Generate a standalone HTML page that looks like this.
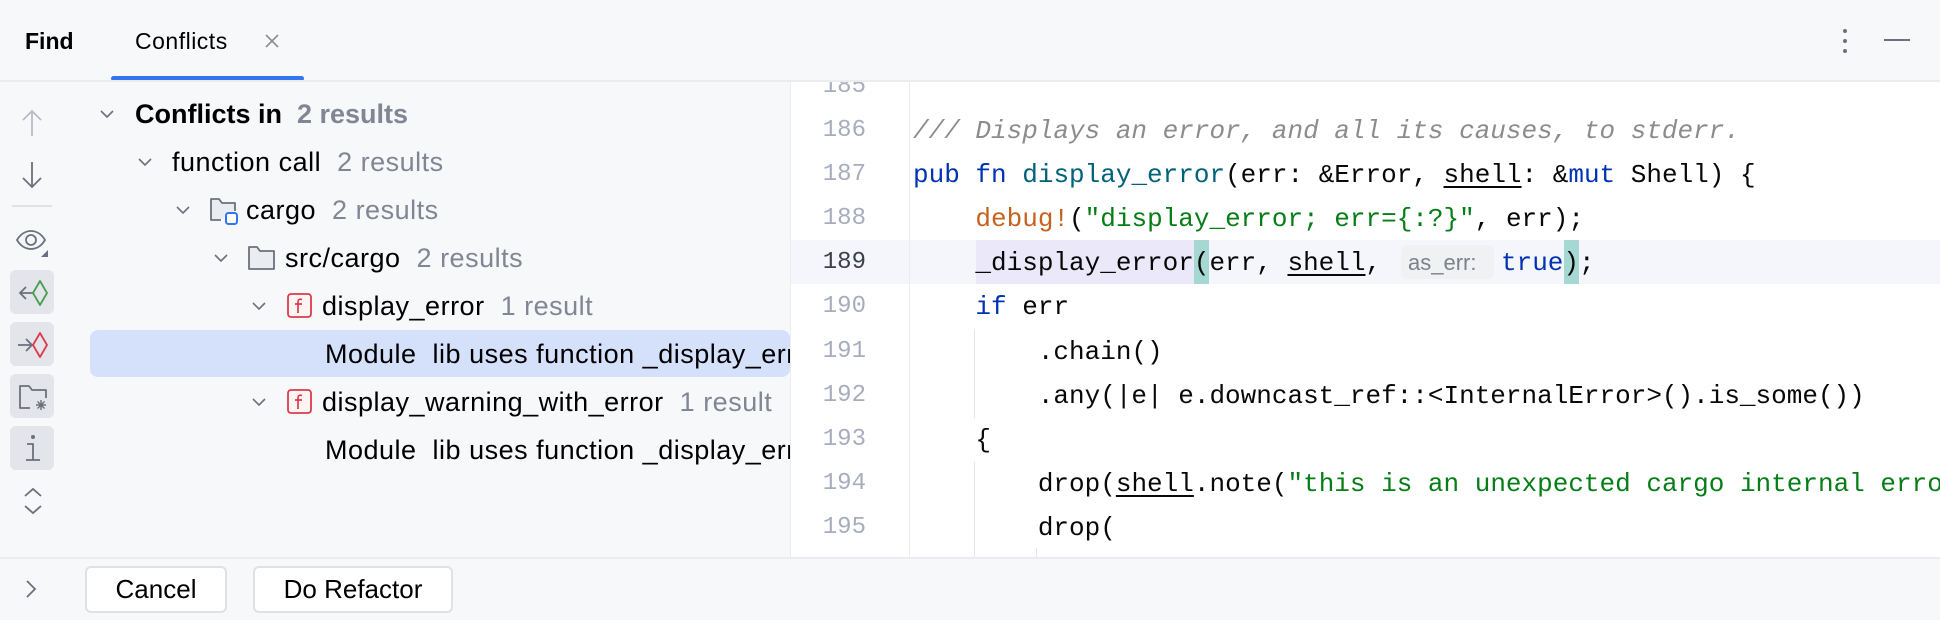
<!DOCTYPE html>
<html><head><meta charset="utf-8"><style>
*{margin:0;padding:0;box-sizing:border-box}
body{width:1940px;height:620px;overflow:hidden;background:#f7f8fa;font-family:"Liberation Sans",sans-serif;color:#000;position:relative}
.a{position:absolute;white-space:pre}
.t{font-size:27px;letter-spacing:0.5px;line-height:48px;height:48px}
.g{color:#818594}
.chev{position:absolute;width:14px;height:14px}
.code{font-family:"Liberation Mono",monospace;font-size:26px;line-height:44px;height:44px;color:#080808}
.ln{font-family:"Liberation Mono",monospace;font-size:24px;line-height:44px;color:#a8adbd;width:70px;text-align:right;left:796px}
.kw{color:#0033b3}.fn{color:#00627a}.str{color:#067d17}.mac{color:#c7611d}.cm{color:#8c8c8c;font-style:italic}
u{text-decoration:underline;text-underline-offset:4px}
.tb{position:absolute;left:10px;width:44px;height:44px;border-radius:6px;background:#e3e5ea}
</style></head><body>
<!-- header -->
<div class="a" style="left:25px;top:24px;font-size:23px;font-weight:bold;line-height:34px">Find</div>
<div class="a" style="left:135px;top:24px;font-size:23px;line-height:34px;letter-spacing:0.5px">Conflicts</div>
<svg class="a" style="left:264px;top:33px" width="16" height="16"><path d="M2 2L14 14M14 2L2 14" stroke="#8c8f98" stroke-width="1.6"/></svg>
<div class="a" style="left:111px;top:76px;width:193px;height:5px;background:#3574f0;border-radius:3px"></div>
<div class="a" style="left:0;top:80px;width:1940px;height:2px;background:#ebecf0"></div>
<svg class="a" style="left:1838px;top:28px" width="14" height="26"><circle cx="7" cy="3" r="2" fill="#6c707e"/><circle cx="7" cy="13" r="2" fill="#6c707e"/><circle cx="7" cy="23" r="2" fill="#6c707e"/></svg>
<div class="a" style="left:1884px;top:39px;width:26px;height:2px;background:#6c707e"></div>

<!-- left toolbar -->
<svg class="a" style="left:20px;top:108px" width="24" height="30"><path d="M12 28V3M3 12L12 3L21 12" stroke="#b9bcc4" stroke-width="1.8" fill="none"/></svg>
<svg class="a" style="left:20px;top:160px" width="24" height="30"><path d="M12 2V27M3 18L12 27L21 18" stroke="#6c707e" stroke-width="1.8" fill="none"/></svg>
<div class="a" style="left:12px;top:205px;width:40px;height:2px;background:#dfe1e5"></div>
<svg class="a" style="left:14px;top:226px" width="40" height="34"><path d="M3 14C10 2 24 2 31 14C24 26 10 26 3 14Z" stroke="#6c707e" stroke-width="1.8" fill="none"/><circle cx="17" cy="14" r="5" stroke="#6c707e" stroke-width="1.8" fill="none"/><path d="M34 24L34 31L27 31Z" fill="#6c707e"/></svg>
<div class="tb" style="top:270px"></div>
<svg class="a" style="left:16px;top:276px" width="34" height="34"><path d="M18 17H4M10 11L4 17L10 23" stroke="#6c707e" stroke-width="1.8" fill="none"/><path d="M24 5L31 17L24 29L17 17Z" stroke="#4a9d4f" stroke-width="1.8" fill="none" stroke-linejoin="round"/></svg>
<div class="tb" style="top:322px"></div>
<svg class="a" style="left:16px;top:328px" width="34" height="34"><path d="M2 17H16M10 11L16 17L10 23" stroke="#6c707e" stroke-width="1.8" fill="none"/><path d="M24 5L31 17L24 29L17 17Z" stroke="#db3b4b" stroke-width="1.8" fill="none" stroke-linejoin="round"/></svg>
<div class="tb" style="top:374px"></div>
<svg class="a" style="left:16px;top:380px" width="34" height="34"><path d="M14 28H4V6H13L16 10H30V18" stroke="#6c707e" stroke-width="1.8" fill="none" stroke-linejoin="round"/><circle cx="25" cy="25" r="7" fill="#e3e5ea"/><path d="M25 20V30M20 25H30M21.5 21.5L28.5 28.5M28.5 21.5L21.5 28.5" stroke="#6c707e" stroke-width="1.4"/></svg>
<div class="tb" style="top:426px"></div>
<svg class="a" style="left:20px;top:432px" width="26" height="32"><circle cx="13" cy="5" r="2" fill="#6c707e"/><path d="M7 12H13V28M6 28H20" stroke="#6c707e" stroke-width="1.8" fill="none"/></svg>
<svg class="a" style="left:22px;top:486px" width="22" height="30"><path d="M3 10L11 3L19 10M3 20L11 27L19 20" stroke="#6c707e" stroke-width="1.8" fill="none"/></svg>
<svg class="a" style="left:24px;top:578px" width="14" height="22"><path d="M3 3L11 11L3 19" stroke="#6c707e" stroke-width="1.8" fill="none"/></svg>

<!-- tree -->
<div class="a" style="left:90px;top:330px;width:700px;height:47px;background:#d5e1fa;border-radius:8px"></div>
<svg class="chev" style="left:100px;top:107px"><path d="M1 4L7 10L13 4" stroke="#6c707e" stroke-width="1.6" fill="none"/></svg>
<div class="a t" style="left:135px;top:90px;font-weight:bold;letter-spacing:0">Conflicts in  <span class="g">2 results</span></div>
<svg class="chev" style="left:138px;top:155px"><path d="M1 4L7 10L13 4" stroke="#6c707e" stroke-width="1.6" fill="none"/></svg>
<div class="a t" style="left:172px;top:138px">function call  <span class="g">2 results</span></div>
<svg class="chev" style="left:176px;top:203px"><path d="M1 4L7 10L13 4" stroke="#6c707e" stroke-width="1.6" fill="none"/></svg>
<svg class="a" style="left:208px;top:196px" width="34" height="30"><path d="M13 24H3V3H11L14 7H27V15" stroke="#6c707e" stroke-width="1.8" fill="#ebecf0" stroke-linejoin="round"/><rect x="18" y="17" width="11" height="11" rx="2.5" stroke="#3574f0" stroke-width="2" fill="#fff"/></svg>
<div class="a t" style="left:246px;top:186px">cargo  <span class="g">2 results</span></div>
<svg class="chev" style="left:214px;top:251px"><path d="M1 4L7 10L13 4" stroke="#6c707e" stroke-width="1.6" fill="none"/></svg>
<svg class="a" style="left:246px;top:244px" width="32" height="30"><path d="M3 25V3H11L14 7H28V25Z" stroke="#6c707e" stroke-width="1.8" fill="#ebecf0" stroke-linejoin="round"/></svg>
<div class="a t" style="left:285px;top:234px">src/cargo  <span class="g">2 results</span></div>
<svg class="chev" style="left:252px;top:299px"><path d="M1 4L7 10L13 4" stroke="#6c707e" stroke-width="1.6" fill="none"/></svg>
<svg class="a" style="left:287px;top:293px" width="26" height="26"><rect x="1" y="1" width="23" height="23" rx="3" stroke="#db3b4b" stroke-width="1.8" fill="#fff5f5"/><path d="M15 6.5C12 5.5 11 7 11 9V20M8 11H15" stroke="#db3b4b" stroke-width="1.7" fill="none"/></svg>
<div class="a t" style="left:322px;top:282px">display_error  <span class="g">1 result</span></div>
<div class="a t" style="left:325px;top:330px;width:465px;overflow:hidden">Module  lib uses function _display_error(</div>
<svg class="chev" style="left:252px;top:395px"><path d="M1 4L7 10L13 4" stroke="#6c707e" stroke-width="1.6" fill="none"/></svg>
<svg class="a" style="left:287px;top:389px" width="26" height="26"><rect x="1" y="1" width="23" height="23" rx="3" stroke="#db3b4b" stroke-width="1.8" fill="#fff5f5"/><path d="M15 6.5C12 5.5 11 7 11 9V20M8 11H15" stroke="#db3b4b" stroke-width="1.7" fill="none"/></svg>
<div class="a t" style="left:322px;top:378px">display_warning_with_error  <span class="g">1 result</span></div>
<div class="a t" style="left:325px;top:426px;width:465px;overflow:hidden">Module  lib uses function _display_error(</div>

<!-- editor -->
<div class="a" style="left:790px;top:82px;width:1150px;height:476px;background:#fff;overflow:hidden;border-left:1px solid #ebecf0">
<div class="a" style="left:0;top:158px;width:1150px;height:44px;background:#f5f6fb"></div>
<div class="a" style="left:118px;top:0;width:1px;height:476px;background:#ebecf0"></div>
<div class="a" style="left:183px;top:248px;width:1px;height:88px;background:#e4e5e9"></div>
<div class="a" style="left:183px;top:380px;width:1px;height:96px;background:#e4e5e9"></div>
<div class="a" style="left:245px;top:466px;width:1px;height:10px;background:#e4e5e9"></div>
</div>
<div class="a" style="left:0;top:557px;width:1940px;height:2px;background:#ebecf0"></div>
<div style="position:absolute;left:791px;top:82px;width:1149px;height:475px;overflow:hidden">
<div style="position:absolute;left:-791px;top:-82px;width:1940px;height:620px">
<div class="a ln" style="top:65px">185</div>
<div class="a ln" style="top:109px">186</div>
<div class="a ln" style="top:153px">187</div>
<div class="a ln" style="top:197px">188</div>
<div class="a ln" style="top:241px;color:#3e4049">189</div>
<div class="a ln" style="top:285px">190</div>
<div class="a ln" style="top:330px">191</div>
<div class="a ln" style="top:374px">192</div>
<div class="a ln" style="top:418px">193</div>
<div class="a ln" style="top:462px">194</div>
<div class="a ln" style="top:506px">195</div>
<div class="a" style="left:976px;top:240px;width:218px;height:44px;background:#ebe8fa"></div>
<div class="a" style="left:1194px;top:240px;width:15px;height:44px;background:#a6d8d3"></div>
<div class="a" style="left:1564px;top:240px;width:15px;height:44px;background:#a6d8d3"></div>
<div class="a" style="left:1401px;top:245px;width:93px;height:34px;background:#f0f1f3;border-radius:6px"></div>
<div class="a code" style="left:913px;top:109px"><span class="cm">/// Displays an error, and all its causes, to stderr.</span></div>
<div class="a code" style="left:913px;top:153px"><span class="kw">pub fn</span> <span class="fn">display_error</span>(err: &amp;Error, <u>shell</u>: &amp;<span class="kw">mut</span> Shell) {</div>
<div class="a code" style="left:913px;top:197px">    <span class="mac">debug!</span>(<span class="str">"display_error; err={:?}"</span>, err);</div>
<div class="a code" style="left:913px;top:241px">    _display_error(err, <u>shell</u>, </div>
<div class="a" style="left:1408px;top:241px;font-size:22px;line-height:44px;color:#7d818a">as_err:</div>
<div class="a code" style="left:1501px;top:241px"><span class="kw">true</span>);</div>
<div class="a code" style="left:913px;top:285px">    <span class="kw">if</span> err</div>
<div class="a code" style="left:913px;top:330px">        .chain()</div>
<div class="a code" style="left:913px;top:374px">        .any(|e| e.downcast_ref::&lt;InternalError&gt;().is_some())</div>
<div class="a code" style="left:913px;top:418px">    {</div>
<div class="a code" style="left:913px;top:462px">        drop(<u>shell</u>.note(<span class="str">"this is an unexpected cargo internal error</span></div>
<div class="a code" style="left:913px;top:506px">        drop(</div>
</div></div>

<!-- bottom buttons -->
<div class="a" style="left:85px;top:566px;width:142px;height:47px;border:2px solid #dfe1e5;border-radius:6px;background:#fff;font-size:26px;line-height:43px;text-align:center">Cancel</div>
<div class="a" style="left:253px;top:566px;width:200px;height:47px;border:2px solid #dfe1e5;border-radius:6px;background:#fff;font-size:26px;line-height:43px;text-align:center">Do Refactor</div>
</body></html>
